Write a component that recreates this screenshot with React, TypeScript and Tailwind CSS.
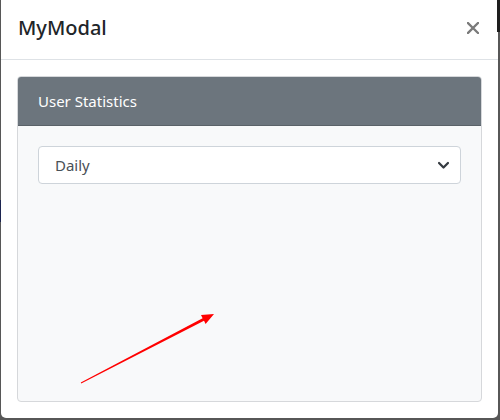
import React from "react";

function ChevronDown() {
    return (
        <svg width="13" height="10" viewBox="0 0 16 12" className="text-[#343a40]">
            <path
                d="M2.5 3.5l5.5 5.5 5.5-5.5"
                fill="none"
                stroke="currentColor"
                strokeWidth="2.8"
                strokeLinecap="round"
                strokeLinejoin="round"
            />
        </svg>
    );
}

function CloseIcon() {
    return (
        <svg width="12" height="12" viewBox="0 0 12 12">
            <path d="M1 1l10 10M11 1L1 11" stroke="#7a7a7a" strokeWidth="2.3" strokeLinecap="square" />
        </svg>
    );
}

function RedArrow() {
    return (
        <svg
            className="absolute left-0 top-0 pointer-events-none"
            width="500"
            height="420"
            viewBox="0 0 500 420"
        >
            <polygon
                points="80.8,382.6 81.2,383.4 204,320.8 205.6,323.9 214,314 201,315.1 202.6,318.2"
                fill="#ff0000"
            />
        </svg>
    );
}

export default function App() {
    return (
        <div
            className="relative w-[500px] h-[420px] overflow-hidden bg-[#575757]"
            style={{ fontFamily: '"Noto Sans", "Open Sans", Arial, sans-serif' }}
        >
            {/* backdrop bits */}
            <div className="absolute right-0 top-0 w-[3px] h-[32px] bg-[#1e1e1e]" />
            <div className="absolute left-0 top-[200px] w-[1px] h-[22px] bg-[#1c2450]" />

            {/* modal */}
            <div className="ml-[1px] w-[497px] h-[418px] bg-white rounded-b-[5px] flex flex-col">
                {/* header */}
                <div className="h-[60px] flex items-center justify-between pl-[17px] pr-[19px] border-b border-[#dee2e6]">
                    <h5 className="text-[20px] font-medium text-[#212529] leading-none -mt-[3px]">
                        MyModal
                    </h5>
                    <button className="-mt-[3px]">
                        <CloseIcon />
                    </button>
                </div>

                {/* body */}
                <div className="p-4 flex-1 flex">
                    <div className="flex-1 flex flex-col border border-[#d6d8db] rounded-[4px] overflow-hidden bg-[#f8f9fa]">
                        <div className="h-[49px] bg-[#6c757d] border-b border-[#5a6268] px-5 flex items-center">
                            <span className="text-white text-[15px]">User Statistics</span>
                        </div>
                        <div className="flex-1 px-5 pt-5">
                            <div className="h-[38px] bg-white border border-[#ced4da] rounded-[4px] flex items-center justify-between pl-4 pr-[10px]">
                                <span className="text-[#495057] text-[15px]">Daily</span>
                                <ChevronDown />
                            </div>
                        </div>
                    </div>
                </div>
            </div>

            <RedArrow />
        </div>
    );
}
